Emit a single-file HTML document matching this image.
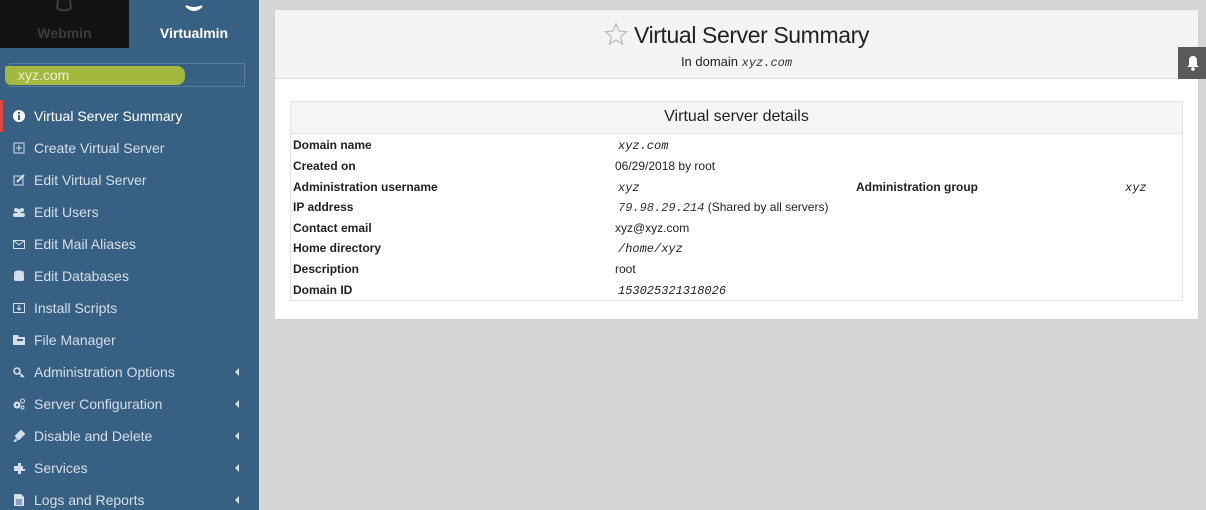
<!DOCTYPE html>
<html><head><meta charset="utf-8"><style>
*{margin:0;padding:0;box-sizing:border-box}
html,body{width:1206px;height:510px;overflow:hidden}
body{background:#d6d6d6;font-family:"Liberation Sans",sans-serif;position:relative}
#sb{position:absolute;left:0;top:0;width:259px;height:520px;background:#386083}
.tab{position:absolute;top:0;height:48px;text-align:center;font-size:14px;font-weight:bold}
#wm{left:0;width:129px;background:#111314;color:#3a3d40}
#vm{left:129px;width:130px;color:#fff}
.tab span{position:absolute;left:0;right:0;top:25px}
#search{position:absolute;left:9px;top:63px;width:236px;height:24px;border:1px solid #5a7d9c}
#hl{position:absolute;left:5px;top:66px;width:180px;height:19px;background:#a2b83e;border-radius:2px 8px 8px 6px}
#hl span{position:absolute;left:13px;top:1px;color:#e8f0d0;font-size:14px}
.mi{position:absolute;left:0;width:259px;height:32px;color:#d5dfe9;font-size:14px}
.mi .t{position:absolute;left:34px;top:8px}
.mi .ic{position:absolute;left:13px;top:10px;width:12px;height:12px}
.mi .ar{position:absolute;left:235px;top:12px;width:0;height:0;border-top:4px solid transparent;border-bottom:4px solid transparent;border-right:4px solid #d5dfe9}
#act{color:#fff}
#red{position:absolute;left:0;top:100px;width:3px;height:32px;background:#e04545}
#panel{position:absolute;left:275px;top:10px;width:923px;height:309px;background:#fff;box-shadow:0 0 1px #bbb}
#hdr{position:absolute;left:0;top:0;width:923px;height:69px;background:#f4f4f4;border-bottom:1px solid #ddd;text-align:center}
#title{position:absolute;left:0;right:0;top:12px;font-size:23px;letter-spacing:-0.4px;color:#222}
#sub{position:absolute;left:0;right:0;top:44px;font-size:13px;color:#222}
.mono{font-family:"Liberation Mono",monospace;font-style:italic;font-size:12px;color:#333}
#bell{position:absolute;left:1178px;top:47px;width:28px;height:32px;background:#5a5a5a}
#tbl{position:absolute;left:290px;top:101px;width:893px;height:200px;border:1px solid #e3e3e3}
#th{height:32px;background:#f5f5f5;border-bottom:1px solid #e8e8e8;text-align:center;font-size:16px;color:#222;padding-top:6px}
.r{position:absolute;font-size:12px;color:#222}
.b{font-weight:bold}
</style></head><body>
<div id="sb">
<div class="tab" id="wm"><svg style="position:absolute;left:54px;top:-2px" width="20" height="16" viewBox="0 0 20 16"><path d="M4 2 Q10 -2 16 2 L17 10 Q10 15 3 10 Z" fill="none" stroke="#3a3d40" stroke-width="2"/></svg><span>Webmin</span></div>
<div class="tab" id="vm"><svg style="position:absolute;left:55px;top:4px" width="20" height="10" viewBox="0 0 20 10"><path d="M2 2 Q10 10 18 2 Q10 6 2 2Z" fill="#fff" stroke="#fff" stroke-width="2"/></svg><span>Virtualmin</span></div>
<div id="search"></div>
<div id="hl"><span>xyz.com</span></div>
<div id="red"></div>
<div class="mi" id="act" style="top:100px"><svg class="ic" viewBox="0 0 12 12"><circle cx="6" cy="6" r="6" fill="#fff"/><rect x="5" y="5" width="2" height="5" fill="#386083"/><rect x="5" y="2" width="2" height="2" fill="#386083"/></svg><span class="t">Virtual Server Summary</span></div>
<div class="mi" style="top:132px"><svg class="ic" viewBox="0 0 12 12"><rect x="1" y="1" width="10" height="10" fill="none" stroke="#d5dfe9"/><path d="M6 3v6M3 6h6" stroke="#d5dfe9"/></svg><span class="t">Create Virtual Server</span></div>
<div class="mi" style="top:164px"><svg class="ic" viewBox="0 0 12 12"><rect x="1" y="2" width="9" height="9" fill="none" stroke="#d5dfe9"/><path d="M4 8l7-7" stroke="#d5dfe9" stroke-width="2"/></svg><span class="t">Edit Virtual Server</span></div>
<div class="mi" style="top:196px"><svg class="ic" viewBox="0 0 12 12"><circle cx="3" cy="4" r="2" fill="#d5dfe9"/><circle cx="9" cy="4" r="2" fill="#d5dfe9"/><circle cx="6" cy="5" r="2.3" fill="#d5dfe9"/><rect x="0" y="7" width="12" height="4" rx="2" fill="#d5dfe9"/></svg><span class="t">Edit Users</span></div>
<div class="mi" style="top:228px"><svg class="ic" viewBox="0 0 12 12"><rect x="0.5" y="2.5" width="11" height="8" fill="none" stroke="#d5dfe9"/><path d="M1 3l5 4 5-4" fill="none" stroke="#d5dfe9"/></svg><span class="t">Edit Mail Aliases</span></div>
<div class="mi" style="top:260px"><svg class="ic" viewBox="0 0 12 12"><ellipse cx="6" cy="2.5" rx="5" ry="2" fill="#d5dfe9"/><rect x="1" y="3" width="10" height="8" rx="2" fill="#d5dfe9"/></svg><span class="t">Edit Databases</span></div>
<div class="mi" style="top:292px"><svg class="ic" viewBox="0 0 12 12"><rect x="0.5" y="1.5" width="11" height="9" fill="none" stroke="#d5dfe9"/><path d="M6 3v5M4 6l2 2 2-2" fill="none" stroke="#d5dfe9"/></svg><span class="t">Install Scripts</span></div>
<div class="mi" style="top:324px"><svg class="ic" viewBox="0 0 12 12"><path d="M0 1h5l1 2h6v8H0z" fill="#d5dfe9"/><rect x="4" y="5" width="6" height="2" fill="#386083"/></svg><span class="t">File Manager</span></div>
<div class="mi" style="top:356px"><svg class="ic" viewBox="0 0 12 12"><circle cx="4" cy="5" r="3" fill="none" stroke="#d5dfe9" stroke-width="1.6"/><path d="M6 7l5 4M9 9l-1 2" stroke="#d5dfe9" stroke-width="1.6"/></svg><span class="t">Administration Options</span><i class="ar"></i></div>
<div class="mi" style="top:388px"><svg class="ic" viewBox="0 0 12 12"><circle cx="4" cy="7" r="3.5" fill="#d5dfe9"/><circle cx="4" cy="7" r="1.2" fill="#386083"/><circle cx="9.5" cy="3" r="2" fill="none" stroke="#d5dfe9"/><circle cx="9.5" cy="9.5" r="1.5" fill="none" stroke="#d5dfe9"/></svg><span class="t">Server Configuration</span><i class="ar"></i></div>
<div class="mi" style="top:420px"><svg class="ic" viewBox="0 0 12 12"><path d="M1 12l3-3 M3 6l3 3 5-5-3-3z" stroke="#d5dfe9" stroke-width="2" fill="#d5dfe9"/></svg><span class="t">Disable and Delete</span><i class="ar"></i></div>
<div class="mi" style="top:452px"><svg class="ic" viewBox="0 0 12 12"><path d="M1 4h4V1h3v3h2v3h2v2H8v3H5v-3H1z" fill="#d5dfe9"/></svg><span class="t">Services</span><i class="ar"></i></div>
<div class="mi" style="top:484px"><svg class="ic" viewBox="0 0 12 12"><path d="M1 0h7l3 3v9H1z" fill="#d5dfe9"/><path d="M3 6h6M3 8h6M3 10h6" stroke="#386083"/></svg><span class="t">Logs and Reports</span><i class="ar"></i></div>
</div>
<div id="panel">
<div id="hdr">
<div id="title"><svg style="vertical-align:-3px;margin-right:6px" width="24" height="24" viewBox="0 0 24 24"><path d="M12 2l3 7 7.5.6-5.7 5 1.8 7.4L12 18l-6.6 4 1.8-7.4-5.7-5L9 9z" fill="none" stroke="#bbb" stroke-width="1.3"/></svg>Virtual Server Summary</div>
<div id="sub">In domain <span class="mono">xyz.com</span></div>
</div>
</div>
<div id="bell"><svg style="position:absolute;left:8px;top:8px" width="14" height="16" viewBox="0 0 14 16"><path d="M7 1C4 1 3 3 3 6v4l-2 2h12l-2-2V6c0-3-1-5-4-5z" fill="#fff"/><circle cx="7" cy="14" r="1.8" fill="#fff"/></svg></div>
<div id="tbl"><div id="th">Virtual server details</div></div>
<div class="r b" style="left:293px;top:138px">Domain name</div><div class="r mono" style="left:618px;top:139px">xyz.com</div>
<div class="r b" style="left:293px;top:159px">Created on</div><div class="r" style="left:615px;top:159px">06/29/2018 by root</div>
<div class="r b" style="left:293px;top:180px">Administration username</div><div class="r mono" style="left:618px;top:181px">xyz</div>
<div class="r b" style="left:856px;top:180px">Administration group</div><div class="r mono" style="left:1125px;top:181px">xyz</div>
<div class="r b" style="left:293px;top:200px">IP address</div><div class="r" style="left:618px;top:200px"><span class="mono">79.98.29.214</span> (Shared by all servers)</div>
<div class="r b" style="left:293px;top:221px">Contact email</div><div class="r" style="left:615px;top:221px">xyz@xyz.com</div>
<div class="r b" style="left:293px;top:241px">Home directory</div><div class="r mono" style="left:618px;top:242px">/home/xyz</div>
<div class="r b" style="left:293px;top:262px">Description</div><div class="r" style="left:615px;top:262px">root</div>
<div class="r b" style="left:293px;top:283px">Domain ID</div><div class="r mono" style="left:618px;top:284px">153025321318026</div>
</body></html>
